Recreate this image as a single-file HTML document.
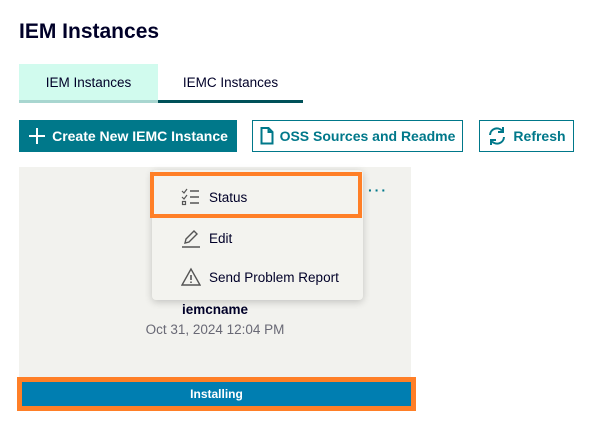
<!DOCTYPE html>
<html><head><style>
*{box-sizing:border-box;margin:0;padding:0}
body{width:600px;height:434px;background:#fff;font-family:"Liberation Sans",sans-serif;color:#000028;position:relative;overflow:hidden}
.a{position:absolute}
h1{position:absolute;left:19px;top:20px;font-size:21px;font-weight:bold;color:#000028}
.tab{position:absolute;top:64px;height:39px;font-size:13.5px;display:flex;align-items:center;justify-content:center;color:#000028}
.btn{position:absolute;top:120px;height:32px;font-size:14px;font-weight:bold;display:flex;align-items:center;justify-content:center;gap:6px}
.ob{border:1px solid #00788a;color:#00788a;background:#fff}
.mi{position:absolute;left:181px;font-size:13.5px;color:#000028;display:flex;align-items:center;gap:8px}
</style></head><body>
<h1>IEM Instances</h1>
<div class="tab" style="left:19px;width:139px;background:#d1fbee;border-bottom:3px solid #a8d6d0">IEM Instances</div>
<div class="tab" style="left:158px;width:145px;border-bottom:3px solid #005159">IEMC Instances</div>

<div class="btn" style="left:19px;width:218px;background:#00788a;color:#fff">
<svg width="18" height="18" viewBox="0 0 18 18"><path d="M9 1v16M1 9h16" stroke="#fff" stroke-width="2"/></svg>Create New IEMC Instance</div>
<div class="btn ob" style="left:252px;width:211px">
<svg width="14" height="18" viewBox="0 0 14 18"><path d="M1.5 1h7l4 4v11.5h-11z M8.5 1v4h4" fill="none" stroke="#00788a" stroke-width="2"/></svg>OSS Sources and Readme</div>
<div class="btn ob" style="left:479px;width:95px">
<svg width="20" height="20" viewBox="0 0 20 20"><path d="M3 9a7 7 0 0 1 12-4.5M17 11a7 7 0 0 1-12 4.5" fill="none" stroke="#00788a" stroke-width="2"/><path d="M16 1v5h-5M4 19v-5h5" fill="none" stroke="#00788a" stroke-width="2"/></svg>Refresh</div>

<div class="a" style="left:19px;top:167px;width:392px;height:244px;background:#f2f2ee"></div>
<div class="a" style="left:368px;top:182px;font-size:14px;color:#00788a;letter-spacing:2px;font-weight:bold">···</div>
<div class="a" style="left:152px;top:170px;width:211px;height:130px;background:#f3f3ef;border-radius:4px;box-shadow:0 2px 8px rgba(0,0,0,.2)"></div>
<div class="a" style="left:150px;top:172px;width:212px;height:46px;border:4px solid #ff7f27"></div>
<div class="mi" style="top:188px"><svg width="20" height="18" viewBox="0 0 20 18"><path d="M1 3l2 2 3-4M1 9l2 2 3-4" fill="none" stroke="#555" stroke-width="1.2"/><rect x="1.5" y="13.5" width="3" height="3" fill="none" stroke="#555" stroke-width="1.2"/><path d="M9 3h9M9 9h9M9 15h9" stroke="#555" stroke-width="1.5"/></svg>Status</div>
<div class="mi" style="top:228px"><svg width="20" height="20" viewBox="0 0 20 20"><path d="M4 15l1-4 8-8 3 3-8 8z" fill="none" stroke="#555" stroke-width="1.4"/><path d="M1 19h18" stroke="#555" stroke-width="1.6"/></svg>Edit</div>
<div class="mi" style="top:267px"><svg width="20" height="20" viewBox="0 0 20 20"><path d="M10 2L1 18h18z" fill="none" stroke="#555" stroke-width="1.4"/><path d="M10 8v5M10 14.5v1.5" stroke="#555" stroke-width="1.6"/></svg>Send Problem Report</div>

<div class="a" style="left:19px;top:302px;width:392px;text-align:center;font-size:13.5px;font-weight:bold">iemcname</div>
<div class="a" style="left:19px;top:322px;width:392px;text-align:center;font-size:13.5px;color:#696975">Oct 31, 2024 12:04 PM</div>

<div class="a" style="left:17px;top:377px;width:399px;height:34px;background:#ff7f27"></div>
<div class="a" style="left:22px;top:382px;width:389px;height:24px;background:#007eb1;color:#fff;font-size:12px;font-weight:bold;display:flex;align-items:center;justify-content:center">Installing</div>
</body></html>
